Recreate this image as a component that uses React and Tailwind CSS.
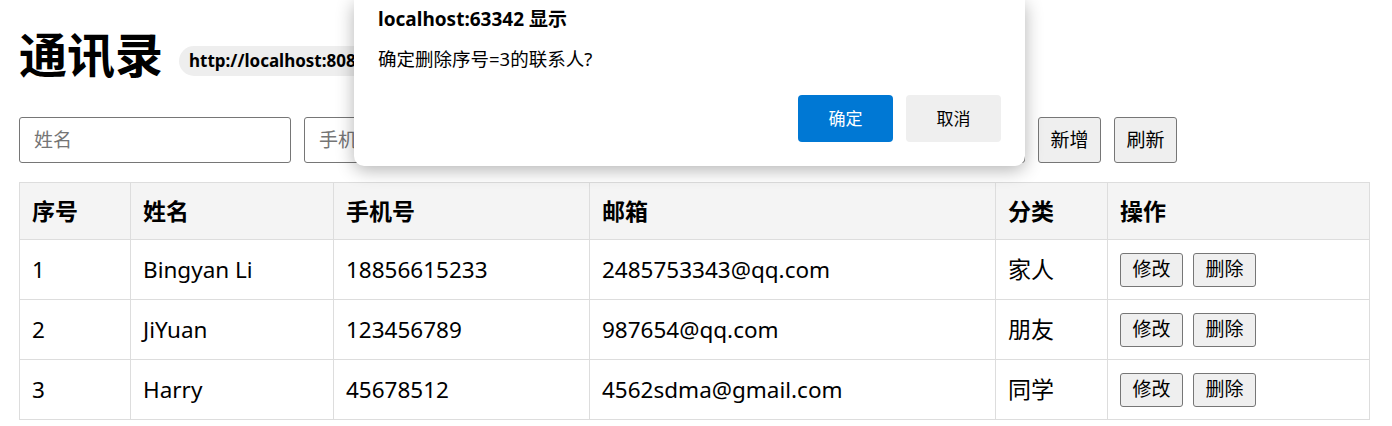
import { useState } from 'react'

const contacts = [
  { id: 1, name: 'Bingyan Li', phone: '18856615233', email: '2485753343@qq.com', type: '家人' },
  { id: 2, name: 'JiYuan', phone: '123456789', email: '987654@qq.com', type: '朋友' },
  { id: 3, name: 'Harry', phone: '45678512', email: '4562sdma@gmail.com', type: '同学' },
]

const font = { fontFamily: '"Noto Sans", "Noto Sans CJK SC", sans-serif' }

const App = () => {
  const [confirmOpen, setConfirmOpen] = useState(true)

  return (
    <div className="relative min-h-screen bg-white text-black" style={font}>
      <div className="px-[19px] pt-[24px]">
        {/* Header */}
        <div className="flex items-center gap-[16px]">
          <h1 className="text-[48px] font-bold leading-[62px]">通讯录</h1>
          <span className="mt-[12px] rounded-full bg-[#eeeeee] px-[10px] py-[3px] text-[17px] font-bold leading-[24px]">
            http://localhost:8080
          </span>
        </div>

        {/* Toolbar */}
        <div className="mt-[31px] flex items-center gap-[13px]">
          <input
            placeholder="姓名"
            className="h-[46px] w-[272px] rounded-[3px] border border-[#767676] px-[14px] text-[19px] placeholder-[#757575] outline-none"
          />
          <input
            placeholder="手机号"
            className="h-[46px] w-[272px] rounded-[3px] border border-[#767676] px-[14px] text-[19px] placeholder-[#757575] outline-none"
          />
          <input
            placeholder="邮箱"
            className="h-[46px] w-[272px] rounded-[3px] border border-[#767676] px-[14px] text-[19px] placeholder-[#757575] outline-none"
          />
          <select className="h-[46px] w-[151px] rounded-[3px] border border-[#767676] px-[10px] text-[19px]">
            <option>全部分类</option>
          </select>
          <button className="h-[46px] w-[63px] rounded-[3px] border border-[#767676] bg-[#efefef] text-[19px]">新增</button>
          <button className="h-[46px] w-[63px] rounded-[3px] border border-[#767676] bg-[#efefef] text-[19px]">刷新</button>
        </div>

        {/* Table */}
        <table className="mt-[19px] w-[1350px] table-fixed border-collapse text-[22.5px]">
          <colgroup>
            <col className="w-[111px]" />
            <col className="w-[203px]" />
            <col className="w-[256px]" />
            <col className="w-[406px]" />
            <col className="w-[112px]" />
            <col className="w-[262px]" />
          </colgroup>
          <thead>
            <tr className="h-[57px] bg-[#f4f4f4] text-left">
              {['序号', '姓名', '手机号', '邮箱', '分类', '操作'].map((h) => (
                <th key={h} className="border border-[#dddddd] px-[12px] text-[23px] font-bold">
                  {h}
                </th>
              ))}
            </tr>
          </thead>
          <tbody>
            {contacts.map((c) => (
              <tr key={c.id} className="h-[60px]">
                <td className="border border-[#dddddd] px-[12px]">{c.id}</td>
                <td className="border border-[#dddddd] px-[12px]">{c.name}</td>
                <td className="border border-[#dddddd] px-[12px]">{c.phone}</td>
                <td className="border border-[#dddddd] px-[12px]">{c.email}</td>
                <td className="border border-[#dddddd] px-[12px] text-[23px]">{c.type}</td>
                <td className="border border-[#dddddd] px-[12px]">
                  <div className="flex gap-[10px]">
                    <button className="h-[34px] w-[63px] rounded-[3px] border border-[#767676] bg-[#efefef] text-[19px]">修改</button>
                    <button
                      onClick={() => setConfirmOpen(true)}
                      className="h-[34px] w-[63px] rounded-[3px] border border-[#767676] bg-[#efefef] text-[19px]"
                    >
                      删除
                    </button>
                  </div>
                </td>
              </tr>
            ))}
          </tbody>
        </table>
      </div>

      {/* Browser confirm dialog */}
      {confirmOpen && (
        <div className="absolute left-[354px] top-0 w-[671px] rounded-b-[10px] bg-white px-[24px] pb-[24px] pt-[4px] shadow-[0_4px_18px_rgba(0,0,0,0.3)]">
          <div className="text-[19px] font-bold leading-[30px]">localhost:63342 显示</div>
          <div className="mt-[12px] text-[18.5px] leading-[26px]">确定删除序号=3的联系人?</div>
          <div className="mt-[23px] flex justify-end gap-[13px]">
            <button
              onClick={() => setConfirmOpen(false)}
              className="h-[47px] w-[95px] rounded-[4px] bg-[#0078d4] text-[17px] text-white"
            >
              确定
            </button>
            <button
              onClick={() => setConfirmOpen(false)}
              className="h-[47px] w-[95px] rounded-[4px] bg-[#efefef] text-[17px]"
            >
              取消
            </button>
          </div>
        </div>
      )}
    </div>
  )
}

export default App
